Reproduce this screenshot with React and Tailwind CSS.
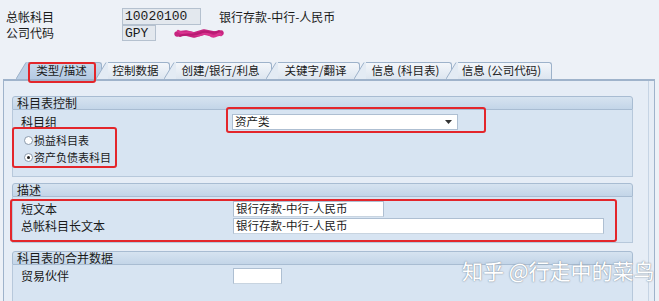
import React from "react";

const F = { fontFamily: '"Noto Sans CJK SC","Noto Sans",sans-serif' };

function Tab({ label, selected, w, first }) {
  return (
    <div className={`relative flex h-[17px] ${first ? "" : "-ml-[6px]"}`} style={{ width: w }}>
      <svg width="12" height="17" className="shrink-0" viewBox="0 0 12 17">
        <polygon points="0,17 10,0 12,0 12,17" fill={selected ? "#bcd0e6" : "#e3ebf4"} />
        <line x1="0" y1="17" x2="10" y2="0.5" stroke="#9db2ca" strokeWidth="1" />
      </svg>
      <div
        className={`flex-1 flex items-center justify-center border-t border-r border-[#9db2ca] rounded-tr-[3px] text-[11.5px] leading-none text-[#1a1a1a] ${
          selected ? "bg-gradient-to-b from-[#c9daec] to-[#b3c9e2]" : "bg-gradient-to-b from-[#f3f6fa] to-[#dde6f0]"
        }`}
      >
        <span className="pr-[6px] whitespace-nowrap">{label}</span>
      </div>
    </div>
  );
}

function SectionHeader({ title }) {
  return (
    <div className="h-[14px] border border-[#a8bcd2] rounded-t-[3px] bg-gradient-to-b from-[#d6e3f0] to-[#c3d5e8] flex items-center pl-[4px] text-[12px] leading-none text-[#1a1a1a]">
      {title}
    </div>
  );
}

function Input({ w, text }) {
  return (
    <div
      className="h-[16px] bg-white border border-[#aebfd2] border-b-[#c8d4e0] flex items-center pl-[2px] text-[11.5px] leading-none text-[#1a1a1a] whitespace-nowrap overflow-hidden"
      style={{ width: w }}
    >
      {text}
    </div>
  );
}

export default function App() {
  return (
    <div className="relative w-[659px] h-[301px] overflow-hidden bg-[#edf1f7] text-[#1a1a1a]" style={F}>
      {/* header rows */}
      <div className="pt-[8px] pl-[6px]">
        <div className="flex items-center h-[17px]">
          <div className="w-[116px] text-[12px] leading-none">总帐科目</div>
          <div className="w-[79px] h-[17px] bg-[#e3e8ee] border border-[#b5c1cf] flex items-center pl-[2px] text-[13px] leading-none" style={{ fontFamily: '"Liberation Mono",monospace' }}>
            10020100
          </div>
          <div className="ml-[18px] text-[12px] leading-none">银行存款-中行-人民币</div>
        </div>
        <div className="flex items-center h-[16px]">
          <div className="w-[116px] text-[12px] leading-none">公司代码</div>
          <div className="w-[34px] h-[16px] bg-[#e3e8ee] border border-[#b5c1cf] flex items-center pl-[2px] text-[13px] leading-none" style={{ fontFamily: '"Liberation Mono",monospace' }}>
            GPY
          </div>
          <svg width="50" height="12" className="ml-[18px]" viewBox="0 0 50 12">
            <path d="M3 7 L12 6 L20 8 L30 5 L40 7 L47 6" stroke="#c7247f" strokeWidth="5.5" fill="none" strokeLinecap="round" strokeLinejoin="round" />
            <path d="M4 4 C10 9 14 3 20 7 S30 3 36 8 S44 4 47 8" stroke="#d9338f" strokeWidth="2.5" fill="none" strokeLinecap="round" />
            <path d="M6 9 C12 5 18 10 26 6 S38 9 45 4" stroke="#b81b73" strokeWidth="2" fill="none" strokeLinecap="round" />
          </svg>
        </div>
      </div>

      {/* tabs */}
      <div className="mt-[21px] flex pl-[16px]">
        <div className="relative">
          <Tab label="类型/描述" selected w={86} first />
          <div className="absolute left-[12px] top-[0px] w-[68px] h-[21px] border-2 border-[#e3262b] rounded-[3px]"></div>
        </div>
        <Tab label="控制数据" w={74} />
        <Tab label="创建/银行/利息" w={108} />
        <Tab label="关键字/翻译" w={94} />
        <Tab label="信息 (科目表)" w={98} />
        <Tab label="信息 (公司代码)" w={106} />
      </div>

      {/* panel */}
      <div className="ml-[3px] w-[652px] h-[230px] border-t-2 border-l border-r border-[#9fb3cb] bg-[#e6edf6]">
        <div className="h-full w-[645px] border-r border-[#c6d4e4] pl-[8px] pt-[15px]">
          {/* section 1 */}
          <div className="relative w-[621px]">
            <SectionHeader title="科目表控制" />
            <div className="h-[67px] bg-[#d7e4f2] border-x border-b border-[#b7c8db]">
              <div className="flex items-center h-[22px] pt-[2px]">
                <div className="w-[219px] pl-[8px] text-[12px] leading-none">科目组</div>
                <div className="w-[226px] h-[16px] bg-white border border-[#aebfd2] flex items-center justify-between pl-[2px] pr-[5px] text-[11.5px] leading-none">
                  <span>资产类</span>
                  <svg width="7" height="4" viewBox="0 0 7 4"><polygon points="0,0 7,0 3.5,4" fill="#333" /></svg>
                </div>
              </div>
              <div className="pl-[11px] flex flex-col gap-[4px] pt-[2px]">
                <div className="flex items-center h-[13px] text-[11px] leading-none">
                  <span className="w-[9px] h-[9px] rounded-full border border-[#8a99ab] bg-white mr-[1px]"></span>
                  损益科目表
                </div>
                <div className="flex items-center h-[13px] text-[11px] leading-none">
                  <span className="w-[9px] h-[9px] rounded-full border border-[#8a99ab] bg-white mr-[1px] flex items-center justify-center">
                    <span className="w-[3px] h-[3px] rounded-full bg-[#222]"></span>
                  </span>
                  资产负债表科目
                </div>
              </div>
            </div>
            <div className="absolute left-[214px] top-[11px] w-[260px] h-[26px] border-2 border-[#e3262b] rounded-[3px]"></div>
            <div className="absolute left-[0px] top-[31px] w-[105px] h-[41px] border-2 border-[#e3262b] rounded-[3px]"></div>
          </div>

          {/* section 2 */}
          <div className="relative w-[621px] mt-[6px]">
            <SectionHeader title="描述" />
            <div className="h-[46px] bg-[#d7e4f2] border-x border-b border-[#b7c8db] pt-[4px] flex flex-col gap-[1px]">
              <div className="flex items-center h-[16px]">
                <div className="w-[220px] pl-[8px] text-[12px] leading-none">短文本</div>
                <Input w={151} text="银行存款-中行-人民币" />
              </div>
              <div className="flex items-center h-[16px]">
                <div className="w-[220px] pl-[8px] text-[12px] leading-none">总帐科目长文本</div>
                <Input w={371} text="银行存款-中行-人民币" />
              </div>
            </div>
            <div className="absolute left-[-2px] top-[16px] w-[607px] h-[43px] border-2 border-[#e3262b] rounded-[3px]"></div>
          </div>

          {/* section 3 */}
          <div className="relative w-[621px] mt-[8px]">
            <SectionHeader title="科目表的合并数据" />
            <div className="h-[40px] bg-[#d7e4f2] border-x border-b border-[#b7c8db] pt-[3px]">
              <div className="flex items-center h-[16px]">
                <div className="w-[220px] pl-[8px] text-[12px] leading-none">贸易伙伴</div>
                <Input w={49} text="" />
              </div>
            </div>
          </div>
        </div>
      </div>

      {/* watermark */}
      <div
        className="absolute left-[462px] top-[260px] text-[21px] leading-none text-white whitespace-nowrap"
        style={{ textShadow: "0 0 1px #7d8a99, 0 0 2px #9aa6b4" }}
      >
        知乎 @行走中的菜鸟
      </div>
    </div>
  );
}
